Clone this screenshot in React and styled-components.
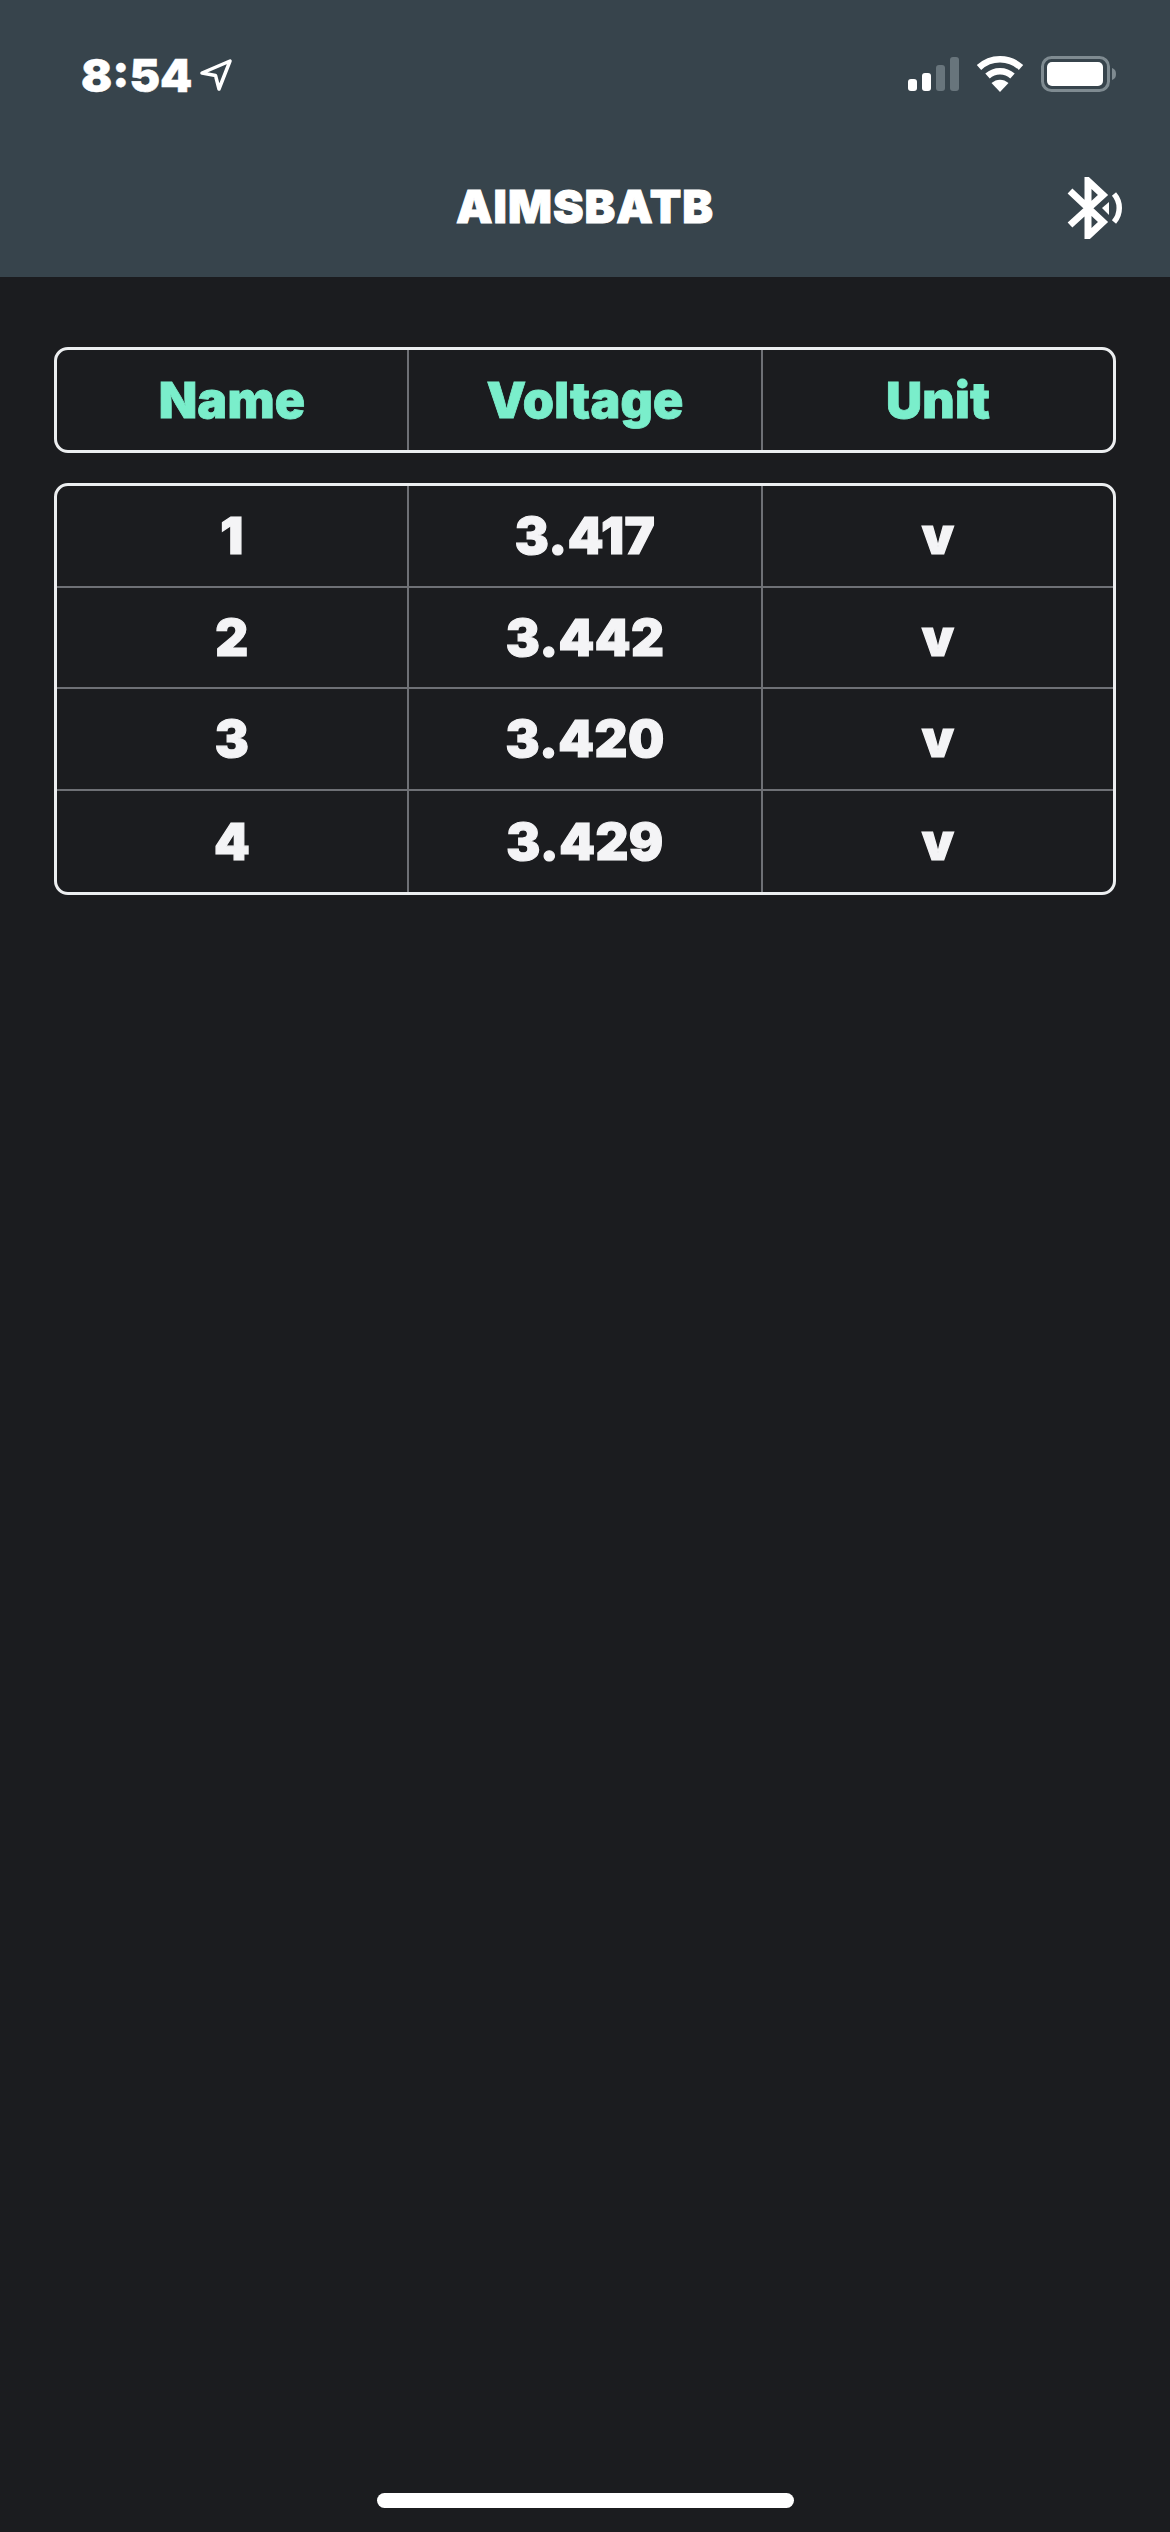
import React from "react";
import styled, { createGlobalStyle } from "styled-components";

const GlobalStyle = createGlobalStyle`
  html, body {
    margin: 0;
    padding: 0;
    background: #1b1c1f;
  }
  body {
    font-family: Inter, "Liberation Sans", sans-serif;
  }
`;

const Page = styled.div`
  width: 1170px;
  height: 2532px;
  display: flex;
  flex-direction: column;
  overflow: hidden;
  background: #1b1c1f;
`;

const TopBar = styled.header`
  height: 277px;
  flex: none;
  background: #37444c;
  color: #fff;
`;

const StatusBar = styled.div`
  height: 177px;
  padding: 51px 54px 0 81px;
  box-sizing: border-box;
  display: flex;
  align-items: flex-start;
  justify-content: space-between;
`;

const TimeGroup = styled.div`
  display: flex;
  align-items: center;
  gap: 8px;
`;

const Time = styled.span`
  font-size: 46px;
  line-height: 48px;
  font-weight: 900;
  letter-spacing: 0;
  -webkit-text-stroke: 0.5px #fff;
`;

const StatusIcons = styled.div`
  display: flex;
  align-items: center;
  gap: 17px;
  padding-top: 5px;
`;

const NavRow = styled.div`
  display: grid;
  grid-template-columns: 1fr auto 1fr;
  align-items: center;
  height: 62px;
  padding: 0 47px;
`;

const Title = styled.h1`
  grid-column: 2;
  margin: 0 0 4px;
  font-size: 46px;
  line-height: 56px;
  font-weight: 900;
  letter-spacing: 1px;
  -webkit-text-stroke: 1px #fff;
`;

const NavIcon = styled.svg`
  justify-self: end;
  display: block;
`;

const Content = styled.main`
  flex: 1;
  padding: 70px 54px 0;
  display: flex;
  flex-direction: column;
  gap: 30px;
`;

const Table = styled.div`
  border: 3px solid #eceef0;
  border-radius: 14px;
  overflow: hidden;
`;

const Row = styled.div`
  display: grid;
  grid-template-columns: 1fr 356px 1fr;
  height: ${(p) => p.$height}px;
  box-sizing: border-box;
  &:not(:last-child) {
    border-bottom: 2px solid #6e7075;
  }
`;

const Cell = styled.div`
  display: flex;
  align-items: center;
  justify-content: center;
  font-size: ${(p) => (p.$head ? 50 : 51)}px;
  font-weight: 900;
  letter-spacing: ${(p) => (p.$head ? 0.2 : 0.4)}px;
  color: ${(p) => (p.$head ? "#7aeecb" : "#f4f4f6")};
  -webkit-text-stroke: ${(p) => (p.$head ? "0.8px #7aeecb" : "1.2px #f4f4f6")};
  &:nth-child(2) {
    border-left: 2px solid #6e7075;
    border-right: 2px solid #6e7075;
  }
`;

const HomeBar = styled.div`
  flex: none;
  width: 417px;
  height: 15px;
  margin: 0 auto 24px;
  border-radius: 8px;
  background: #fff;
`;

const LocationIcon = () => (
  <svg width="32" height="32" viewBox="0 0 32 32" fill="none">
    <path d="M2 14 L30 2 L19 30 L15.5 16.5 Z" stroke="#fff" strokeWidth="3.5" strokeLinejoin="round" />
  </svg>
);

const SignalIcon = () => (
  <svg width="51" height="34" viewBox="0 0 51 34">
    <rect x="0" y="22" width="9" height="12" rx="3" fill="#fff" />
    <rect x="14" y="16" width="9" height="18" rx="3" fill="#fff" />
    <rect x="28" y="8" width="9" height="26" rx="3" fill="#68757c" />
    <rect x="42" y="0" width="9" height="34" rx="3" fill="#68757c" />
  </svg>
);

const WifiIcon = () => (
  <svg width="48" height="36" viewBox="0 0 48 36" fill="none">
    <path d="M3 11.5 C15 0.5 33 0.5 45 11.5" stroke="#fff" strokeWidth="6.5" />
    <path d="M11.5 20 C18.5 13.5 29.5 13.5 36.5 20" stroke="#fff" strokeWidth="6.5" />
    <path d="M15.5 27 C20.5 22.5 27.5 22.5 32.5 27 L24 36 Z" fill="#fff" />
  </svg>
);

const BatteryIcon = () => (
  <svg width="75" height="36" viewBox="0 0 75 36" fill="none">
    <rect x="1.5" y="1.5" width="66" height="33" rx="9" stroke="#7f8b91" strokeWidth="3" />
    <rect x="6" y="6" width="56" height="24" rx="5" fill="#fff" />
    <path d="M71 12 C74 13 75 15 75 18 C75 21 74 23 71 24 Z" fill="#7f8b91" />
  </svg>
);

const BluetoothIcon = () => (
  <NavIcon width="56" height="62" viewBox="0 0 56 62" fill="none">
    <path d="M3 14 L36 45 L21 59 V4 L36 18 L3 48" stroke="#fff" strokeWidth="7" />
    <path d="M35 31 L42 25 V38 Z" fill="#fff" />
    <path d="M47 17 C54 25 54 37 47 45" stroke="#fff" strokeWidth="5.5" />
  </NavIcon>
);

const columns = ["Name", "Voltage", "Unit"];

const cells = [
  { name: "1", voltage: "3.417", unit: "v" },
  { name: "2", voltage: "3.442", unit: "v" },
  { name: "3", voltage: "3.420", unit: "v" },
  { name: "4", voltage: "3.429", unit: "v" },
];

export default function App() {
  return (
    <Page>
      <GlobalStyle />
      <TopBar>
        <StatusBar>
          <TimeGroup>
            <Time>8:54</Time>
            <LocationIcon />
          </TimeGroup>
          <StatusIcons>
            <SignalIcon />
            <WifiIcon />
            <BatteryIcon />
          </StatusIcons>
        </StatusBar>
        <NavRow>
          <Title>AIMSBATB</Title>
          <BluetoothIcon />
        </NavRow>
      </TopBar>
      <Content>
        <Table>
          <Row $height={100}>
            {columns.map((col) => (
              <Cell $head key={col}>
                {col}
              </Cell>
            ))}
          </Row>
        </Table>
        <Table>
          {cells.map((cell) => (
            <Row $height={101.5} key={cell.name}>
              <Cell>{cell.name}</Cell>
              <Cell>{cell.voltage}</Cell>
              <Cell>{cell.unit}</Cell>
            </Row>
          ))}
        </Table>
      </Content>
      <HomeBar />
    </Page>
  );
}
